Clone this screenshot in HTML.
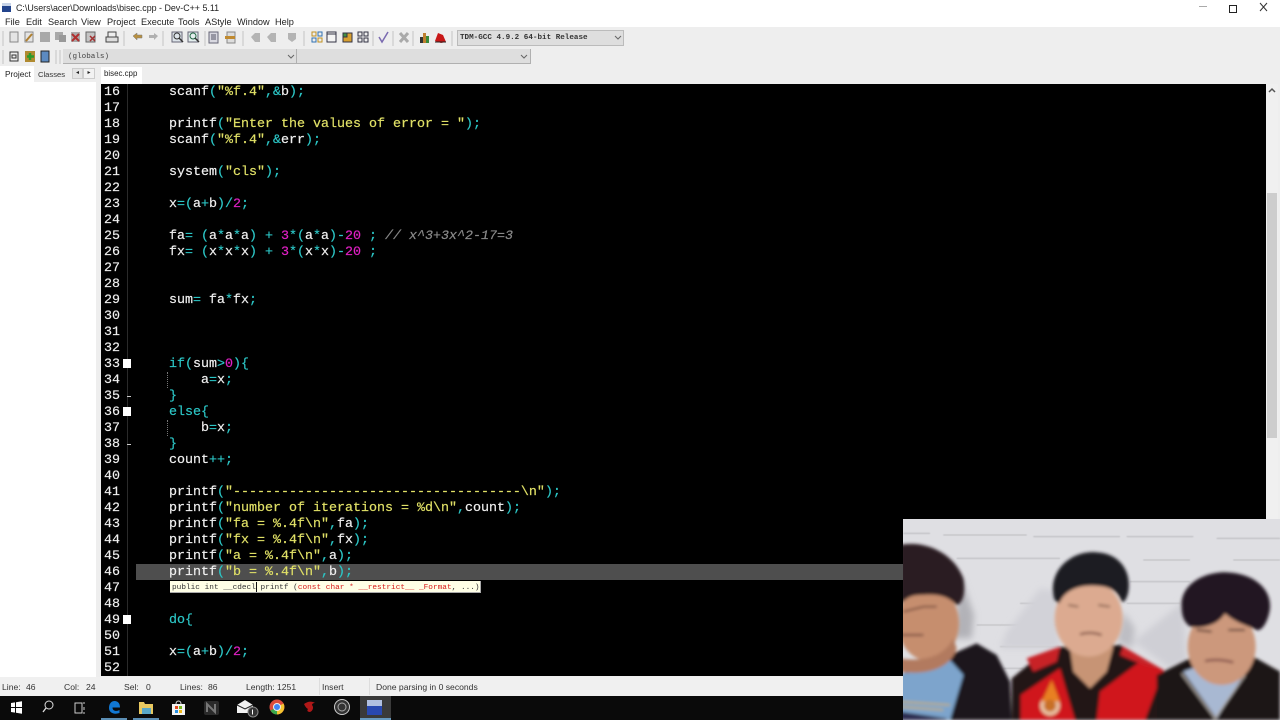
<!DOCTYPE html>
<html><head><meta charset="utf-8"><title>Dev-C++</title>
<style>
html,body{margin:0;padding:0;width:1280px;height:720px;overflow:hidden;background:#eee;font-family:"Liberation Sans",sans-serif;}
.a{position:absolute}
.t{position:absolute;font-size:9.2px;color:#222;white-space:pre;line-height:12px}
pre{margin:0;font-family:"Liberation Mono",monospace;font-size:13.33px;line-height:16px;position:absolute}
#code{color:#f0f0f0;-webkit-text-stroke:.2px currentColor}
#nums{color:#f0f0f0;-webkit-text-stroke:.15px currentColor}
i{font-style:normal;color:#2cc6c6}
b{font-weight:normal;color:#e0e066}
u{text-decoration:none;color:#e020c4}
em{color:#8a8a8a}
.fold{position:absolute;left:123px;width:8px;height:9px;background:#fff}
.dash{position:absolute;left:127px;width:4px;height:1px;background:#ccc}
.dot{position:absolute;left:167px;width:0;border-left:1px dotted #777}
svg{display:block}
</style></head><body>
<!-- title and menu -->
<div class="a" style="left:0;top:0;width:1280px;height:27px;background:#fff"></div>
<div class="a" style="left:2px;top:3px;width:9px;height:9px;background:#23448c"><div style="height:3px;background:#c8d4e8"></div></div>
<div class="t" style="left:16px;top:2px;font-size:8.9px">C:\Users\acer\Downloads\bisec.cpp - Dev-C++ 5.11</div>
<div class="t" style="left:5px;top:16px">File</div>
<div class="t" style="left:26px;top:16px">Edit</div>
<div class="t" style="left:48px;top:16px">Search</div>
<div class="t" style="left:81px;top:16px">View</div>
<div class="t" style="left:107px;top:16px">Project</div>
<div class="t" style="left:141px;top:16px">Execute</div>
<div class="t" style="left:178px;top:16px">Tools</div>
<div class="t" style="left:205px;top:16px">AStyle</div>
<div class="t" style="left:237px;top:16px">Window</div>
<div class="t" style="left:275px;top:16px">Help</div>
<!-- window buttons -->
<div class="a" style="left:1199px;top:6px;width:8px;height:1px;background:#aaa"></div>
<div class="a" style="left:1229px;top:5px;width:6px;height:6px;border:1px solid #222"></div>
<svg class="a" style="left:1259px;top:2px" width="9" height="10"><path d="M1 1L8 9M8 1L1 9" stroke="#333" fill="none"/></svg>
<!-- toolbar row 1 -->
<svg class="a" style="left:0;top:28px" width="660" height="20" fill="none">
<g stroke="#c4c4c4"><path d="M3 3v15M124 3v15M163 3v15M205 3v15M243 3v15M304 3v15M373 3v15M393 3v15M413 3v15M452 3v15"/></g>
<rect x="10" y="4" width="8" height="10" fill="#e4e4e4" stroke="#888"/>
<rect x="25" y="4" width="8" height="10" fill="#e4e4e4" stroke="#888"/><path d="M26 13l6-7" stroke="#b08030" stroke-width="2"/>
<rect x="40" y="4" width="10" height="10" fill="#a8a8a8"/>
<rect x="55" y="4" width="8" height="8" fill="#a8a8a8"/><rect x="59" y="7" width="7" height="7" fill="#999"/>
<rect x="71" y="4" width="9" height="10" fill="#aaa"/><path d="M72 6l7 7M79 6l-7 7" stroke="#b03030" stroke-width="2"/>
<rect x="86" y="4" width="9" height="10" fill="#c4c4c4" stroke="#666"/><path d="M90 8l5 5M95 8l-5 5" stroke="#a03030" stroke-width="1.5"/>
<rect x="108" y="4" width="8" height="5" stroke="#444"/><rect x="106" y="9" width="12" height="5" fill="#ddd" stroke="#444"/>
<path d="M133 8l4-3v2h5v3h-5v2z" fill="#b89040" stroke="#777" stroke-width=".5"/>
<path d="M158 8l-4-3v2h-5v3h5v2z" fill="#b0b0b0"/>
<rect x="172" y="4" width="10" height="10" fill="#dde4ea" stroke="#667"/><circle cx="177" cy="8" r="3" stroke="#333"/><path d="M179 10l4 4" stroke="#333" stroke-width="1.5"/>
<rect x="188" y="4" width="10" height="10" fill="#e4eeee" stroke="#667"/><circle cx="193" cy="8" r="3" stroke="#264"/><path d="M195 10l4 4" stroke="#333" stroke-width="1.5"/>
<rect x="209" y="4" width="9" height="11" fill="#d8d8e0" stroke="#667"/><path d="M211 7h5M211 9h5M211 11h5" stroke="#556"/>
<rect x="227" y="4" width="8" height="11" fill="#ddd" stroke="#888"/><rect x="225" y="8" width="10" height="3" fill="#c08a30"/>
<path d="M251 9l4-4h5v9h-5z" fill="#b4b4b4"/><path d="M267 9l4-4h5v9h-5z" fill="#b4b4b4"/><path d="M288 5h8v6l-4 3-4-3z" fill="#b4b4b4"/>
<g stroke="#334" stroke-width="1"><rect x="312" y="4" width="4" height="4" stroke="#c09020"/><rect x="318" y="4" width="4" height="4" stroke="#3070b0"/><rect x="312" y="10" width="4" height="4" stroke="#3070b0"/><rect x="318" y="10" width="4" height="4" stroke="#c09020"/>
<rect x="327" y="4" width="9" height="10" fill="#f4f4f4"/><path d="M327 6h9"/>
<rect x="343" y="5" width="9" height="9" fill="#d8a030"/><rect x="343" y="5" width="4" height="4" fill="#409040"/>
<rect x="358" y="4" width="4" height="4"/><rect x="364" y="4" width="4" height="4"/><rect x="358" y="10" width="4" height="4"/><rect x="364" y="10" width="4" height="4"/></g>
<path d="M379 9l3 5 6-10" stroke="#7a6ab0" stroke-width="1.5"/>
<path d="M400 5l8 9M408 5l-8 9" stroke="#aaa" stroke-width="3"/>
<rect x="420" y="9" width="3" height="6" fill="#333"/><rect x="423" y="5" width="3" height="10" fill="#c08030"/><rect x="426" y="8" width="3" height="7" fill="#3a8a3a"/>
<path d="M435 13l3-8 5 2 3 7-5 1z" fill="#c81818"/><path d="M435 14h11" stroke="#222"/>
</svg>
<div class="a" style="left:457px;top:30px;width:165px;height:14px;background:#dedede;border:1px solid #bbb"></div>
<pre style="left:460px;top:33px;font-size:7.6px;line-height:11px;color:#333;font-weight:bold">TDM-GCC 4.9.2 64-bit Release</pre>
<svg class="a" style="left:614px;top:35px" width="8" height="5"><path d="M1 1l3 3 3-3" stroke="#666" fill="none"/></svg>
<!-- toolbar row 2 -->
<svg class="a" style="left:0;top:48px" width="70" height="18" fill="none">
<path d="M3 2v14M56 2v14M60 2v14" stroke="#c4c4c4"/>
<rect x="10" y="4" width="8" height="9" stroke="#333"/><rect x="12" y="7" width="4" height="3" stroke="#333"/>
<rect x="25" y="3" width="10" height="11" fill="#b08a30"/><path d="M30 5v7M27 8.500h7" stroke="#2a9a2a" stroke-width="2.500"/>
<rect x="41" y="3" width="8" height="11" fill="#5c8ac0" stroke="#222"/>
</svg>
<div class="a" style="left:63px;top:49px;width:233px;height:14px;background:#dedede;border-bottom:1px solid #b0b0b0;border-right:1px solid #b0b0b0"></div>
<div class="a" style="left:297px;top:49px;width:233px;height:14px;background:#dedede;border-bottom:1px solid #b0b0b0;border-right:1px solid #b0b0b0"></div>
<pre style="left:68px;top:52px;font-size:7.6px;line-height:11px;color:#444">(globals)</pre>
<svg class="a" style="left:287px;top:54px" width="8" height="5"><path d="M1 1l3 3 3-3" stroke="#666" fill="none"/></svg>
<svg class="a" style="left:520px;top:54px" width="8" height="5"><path d="M1 1l3 3 3-3" stroke="#666" fill="none"/></svg>
<!-- tabs -->
<div class="a" style="left:0;top:66px;width:34px;height:20px;background:#fff"></div>
<div class="t" style="left:5px;top:68px;font-size:8.3px">Project</div>
<div class="t" style="left:38px;top:69px;font-size:7.6px;color:#333">Classes</div>
<div class="a" style="left:72px;top:68px;width:11px;height:11px;background:#e4e4e4;border:1px solid #ccc;box-sizing:border-box;font-size:6px;line-height:9px;text-align:center;color:#222">◂</div>
<div class="a" style="left:83px;top:68px;width:12px;height:11px;background:#f2f2f2;border:1px solid #ccc;box-sizing:border-box;font-size:6px;line-height:9px;text-align:center;color:#222">▸</div>
<div class="a" style="left:0;top:82px;width:96px;height:595px;background:#fff"></div>
<div class="a" style="left:101px;top:67px;width:41px;height:17px;background:#fff"></div>
<div class="t" style="left:104px;top:68px;font-size:7.9px">bisec.cpp</div>
<!-- editor -->
<div class="a" style="left:101px;top:84px;width:1165px;height:592px;background:#000;overflow:hidden"></div>
<div class="a" style="left:127px;top:84px;width:1px;height:592px;background:#2a2a2a"></div>
<div class="a" style="left:136px;top:564px;width:767px;height:16px;background:#4e4e4e"></div>
<div class="a" style="left:101px;top:84px;width:1165px;height:592px;overflow:hidden">
<pre id="nums" style="left:3px;top:1px">16
17
18
19
20
21
22
23
24
25
26
27
28
29
30
31
32
33
34
35
36
37
38
39
40
41
42
43
44
45
46
47
48
49
50
51
52</pre>
<pre id="code" style="left:68px;top:1px">scanf<i>(</i><b>"%f.4"</b><i>,&amp;</i>b<i>);</i>

printf<i>(</i><b>"Enter the values of error = "</b><i>);</i>
scanf<i>(</i><b>"%f.4"</b><i>,&amp;</i>err<i>);</i>

system<i>(</i><b>"cls"</b><i>);</i>

x<i>=(</i>a<i>+</i>b<i>)/</i><u>2</u><i>;</i>

fa<i>= (</i>a<i>*</i>a<i>*</i>a<i>) + </i><u>3</u><i>*(</i>a<i>*</i>a<i>)-</i><u>20</u><i> ; </i><em><span style="font-style:italic">// x^3+3x^2-17=3</span></em>
fx<i>= (</i>x<i>*</i>x<i>*</i>x<i>) + </i><u>3</u><i>*(</i>x<i>*</i>x<i>)-</i><u>20</u><i> ;</i>


sum<i>=</i> fa<i>*</i>fx<i>;</i>



<i>if(</i>sum<i>&gt;</i><u>0</u><i>){</i>
    a<i>=</i>x<i>;</i>
<i>}</i>
<i>else{</i>
    b<i>=</i>x<i>;</i>
<i>}</i>
count<i>++;</i>

printf<i>(</i><b>"------------------------------------\n"</b><i>);</i>
printf<i>(</i><b>"number of iterations = %d\n"</b><i>,</i>count<i>);</i>
printf<i>(</i><b>"fa = %.4f\n"</b><i>,</i>fa<i>);</i>
printf<i>(</i><b>"fx = %.4f\n"</b><i>,</i>fx<i>);</i>
printf<i>(</i><b>"a = %.4f\n"</b><i>,</i>a<i>);</i>
printf<i>(</i><b>"b = %.4f\n"</b><i>,</i>b<i>);</i>


<i>do{</i>

x<i>=(</i>a<i>+</i>b<i>)/</i><u>2</u><i>;</i>
</pre>
</div>
<div class="fold" style="top:359px"></div>
<div class="fold" style="top:407px"></div>
<div class="fold" style="top:615px"></div>
<div class="dash" style="top:396px"></div>
<div class="dash" style="top:444px"></div>
<div class="dot" style="top:372px;height:16px"></div>
<div class="dot" style="top:420px;height:16px"></div>
<!-- tooltip -->
<div class="a" style="left:170px;top:581px;width:311px;height:12px;background:#ffffe6;border-right:1px solid #aaa;border-bottom:1px solid #aaa;box-sizing:border-box"></div>
<pre style="left:172px;top:582px;font-size:7.78px;line-height:12px;color:#333">public int __cdecl printf (<span style="color:#d81818">const char * __restrict__ _Format</span>, ...)</pre>
<div class="a" style="left:256px;top:582px;width:1px;height:10px;background:#111"></div>
<!-- scrollbar -->
<div class="a" style="left:1266px;top:84px;width:12px;height:592px;background:#f0f0f0"></div>
<div class="a" style="left:1267px;top:193px;width:10px;height:245px;background:#cdcdcd"></div>
<svg class="a" style="left:1268px;top:87px" width="8" height="6"><path d="M1 5l3-3 3 3" stroke="#555" stroke-width="1.500" fill="none"/></svg>
<!-- status -->
<div class="a" style="left:0;top:677px;width:1280px;height:19px;background:#f0f0f0"></div>
<div class="t" style="left:2px;top:681px;font-size:8.6px;color:#333">Line:</div><div class="t" style="left:26px;top:681px;font-size:8.6px;color:#333">46</div>
<div class="t" style="left:64px;top:681px;font-size:8.6px;color:#333">Col:</div><div class="t" style="left:86px;top:681px;font-size:8.6px;color:#333">24</div>
<div class="t" style="left:124px;top:681px;font-size:8.6px;color:#333">Sel:</div><div class="t" style="left:146px;top:681px;font-size:8.6px;color:#333">0</div>
<div class="t" style="left:180px;top:681px;font-size:8.6px;color:#333">Lines:</div><div class="t" style="left:208px;top:681px;font-size:8.6px;color:#333">86</div>
<div class="t" style="left:246px;top:681px;font-size:8.6px;color:#333">Length:</div><div class="t" style="left:277px;top:681px;font-size:8.6px;color:#333">1251</div>
<div class="t" style="left:322px;top:681px;font-size:8.6px;color:#333">Insert</div>
<div class="t" style="left:376px;top:681px;font-size:8.6px;color:#333">Done parsing in 0 seconds</div>
<div class="a" style="left:319px;top:678px;width:1px;height:17px;background:#ddd"></div>
<div class="a" style="left:369px;top:678px;width:1px;height:17px;background:#ddd"></div>
<!-- taskbar -->
<div class="a" style="left:0;top:696px;width:1280px;height:24px;background:#0a0a0a"></div>
<div class="a" style="left:360px;top:696px;width:31px;height:24px;background:#3a3a3a"></div>
<svg class="a" style="left:0;top:696px" width="400" height="24" fill="none">
<path d="M11 7l4-.6V11h-4zM16 6.300l6-1V11h-6zM11 12h4v4.600l-4-.6zM16 12h6v5.700l-6-1z" fill="#fff"/>
<circle cx="49" cy="9" r="4" stroke="#ddd"/><path d="M46 12l-3 4" stroke="#ddd" stroke-width="1.300"/>
<path d="M75 7h7v10h-7zM84 6v2M84 11v3M84 16v2" stroke="#ccc"/>
<path d="M109 12c0-5 3-7 5.500-7 3.500 0 5.500 2.500 5.500 6.500h-7.500c0 3 3 4.500 7 2.500v3c-6 2-10.500-.5-10.500-5z" fill="#1178d4"/>
<path d="M139 6h5l1 2h8v10h-14z" fill="#e8c860"/><rect x="142" y="12" width="9" height="6" fill="#5aa8c8"/>
<path d="M172 8h13v11h-13z" fill="#f4f4f4"/><path d="M176 8c0-4 5-4 5 0" stroke="#ddd"/><rect x="175" y="10" width="3" height="3" fill="#e24a20"/><rect x="179" y="10" width="3" height="3" fill="#7ab820"/><rect x="175" y="14" width="3" height="3" fill="#2a90e0"/><rect x="179" y="14" width="3" height="3" fill="#f0b818"/>
<rect x="204" y="5" width="15" height="14" rx="2" fill="#2a2a2a"/><path d="M207 16V8l8 8V8" stroke="#777" stroke-width="2"/>
<path d="M237 9l8-5 8 5v8h-16z" fill="#f2f2f2"/><path d="M237 9l8 4 8-4" stroke="#222"/><circle cx="253" cy="16" r="5" fill="#333" stroke="#888"/>
<path d="M252.500 13.500v5" stroke="#fff"/>
<circle cx="277" cy="11" r="7.500" fill="#dd4b3c"/><path d="M277 11l-6.500 3.500A7.500 7.500 0 0 0 277 18.500z" fill="#3aa84a"/><path d="M277 11l6.500-3.500A7.500 7.500 0 0 1 277 18.500z" fill="#f4c430"/><circle cx="277" cy="11" r="3.500" fill="#4285f4" stroke="#eee"/>
<path d="M304 8c4-3 8-3 11-1-2 0-3 1-3 2 2 2 1 6-2 7-3 0-3-2-2-3-2-1-3-3-4-5z" fill="#b01818"/>
<circle cx="342" cy="11" r="7.500" fill="#333" stroke="#ccc"/><circle cx="342" cy="11" r="4" stroke="#aaa"/>
<rect x="367" y="4" width="15" height="15" fill="#2848b0"/><rect x="367" y="4" width="15" height="6" fill="#b0bfe0"/>
<path d="M101 23h26M133 23h26M360 23h31" stroke="#76b9ed" stroke-width="1.500"/>
</svg>
<!-- webcam -->
<div class="a" style="left:903px;top:519px;width:377px;height:201px;overflow:hidden;background:#dfdfe3">
<svg style="margin:-4px 0 0 -3px" width="380" height="205" viewBox="0 0 1140 615">
<defs><filter id="bl" x="-5%" y="-5%" width="110%" height="110%"><feGaussianBlur stdDeviation="5"/></filter>
<filter id="bs"><feGaussianBlur stdDeviation="10"/></filter>
<filter id="bt"><feGaussianBlur stdDeviation="1.500"/></filter></defs>
<rect width="1140" height="615" fill="#dfdfe3"/>
<g stroke="#9a9a9e" stroke-width="3" fill="none" opacity=".55" filter="url(#bt)">
<path d="M10 55H90M130 60H380M400 65H660M680 65H880M950 70H1140M170 130H480M730 135H870M1000 135H1140M690 200H870M360 265H460M680 265H840M230 330H470M300 395H490M310 460H370"/>
</g>
<g filter="url(#bs)">
<path d="M180 180L222 300 215 370 160 370z" fill="#b2b2b8"/>
<path d="M320 350L420 220 470 230 480 400 300 400z" fill="#d2d2d8"/>
<path d="M670 290L705 340 695 400 650 380z" fill="#bdbdc3"/>
<path d="M700 380L850 260 860 440 810 460z" fill="#cfcfd5"/>
</g>
<g filter="url(#bl)">
<!-- left person -->
<path d="M0 480L150 420 230 385 290 420 330 500 335 615H0z" fill="#1f191e"/>
<path d="M0 480L150 435 190 480 150 615H0z" fill="#7da4cc"/>
<path d="M0 560L150 570M0 575L130 585" stroke="#d8b030" stroke-width="4"/>
<path d="M0 590L140 610V615H0z" fill="#2a2a50"/>
<ellipse cx="85" cy="325" rx="92" ry="112" fill="#c68e6e"/>
<path d="M0 430C60 440 130 430 160 370L170 400C150 470 60 480 0 470z" fill="#b27a5e"/>
<path d="M0 90C70 75 160 110 190 190 197 230 190 265 170 270 145 245 120 235 60 240 40 240 20 245 0 270z" fill="#2a1a20"/>
<path d="M10 290L70 275 110 275M0 360H70" stroke="#6a4034" stroke-width="5" fill="none"/>
<!-- middle person -->
<path d="M335 490L420 420 490 395 660 390 790 465 790 615H335z" fill="#241518"/>
<path d="M362 540L480 460 500 530 525 615H362zM600 530L720 440 790 465 735 615H590z" fill="#d0121c"/>
<path d="M380 430L480 395 470 440 400 470zM670 395L790 465 730 450 660 420z" fill="#c82028"/>
<path d="M510 400L640 395 620 470 570 520 520 470z" fill="#c79474"/>
<ellipse cx="566" cy="310" rx="102" ry="115" fill="#dcaa90"/>
<path d="M460 235C450 160 520 105 590 112 660 115 695 170 685 230 680 255 670 265 665 260 650 220 620 212 570 212 520 214 490 235 478 265 465 260 460 250 460 235z" fill="#1c1a20"/>
<path d="M505 270L535 275M595 270L630 275" stroke="#7a5444" stroke-width="5"/>
<path d="M540 358Q570 348 605 360" stroke="#7a4a3c" stroke-width="6" fill="none"/>
<circle cx="450" cy="572" r="30" fill="#e8c0a0"/><path d="M455 495L425 560H480z" fill="#e88020"/><circle cx="450" cy="572" r="18" fill="#c87028"/>
<!-- right person -->
<path d="M770 480L870 430 1060 425 1140 470V615H770z" fill="#1e1516"/>
<path d="M850 470L890 455 1030 480 950 610z" fill="#a8b8d2"/>
<path d="M845 475L945 610 1035 480" stroke="#b8b0a8" stroke-width="4" fill="none"/>
<ellipse cx="965" cy="395" rx="102" ry="115" fill="#cc987c"/>
<path d="M845 275C840 210 910 170 980 172 1060 175 1115 220 1110 280 1105 320 1085 350 1070 345 1040 330 1010 325 975 295 950 335 900 340 870 335 850 320 845 300 845 275z" fill="#231820"/>
<path d="M890 345L935 350M985 345L1035 345" stroke="#5a3a30" stroke-width="6"/>
<path d="M915 438Q955 430 1000 442" stroke="#84504a" stroke-width="7" fill="none"/>
</g>
</svg>
</div>
</body></html>
